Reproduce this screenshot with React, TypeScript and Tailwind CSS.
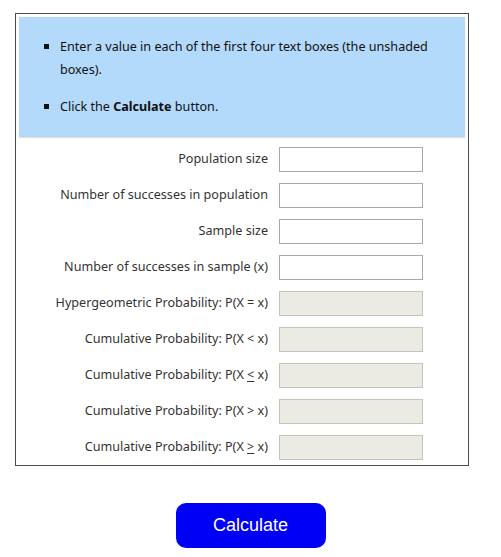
const inputs = [
  { label: 'Population size', shaded: false },
  { label: 'Number of successes in population', shaded: false },
  { label: 'Sample size', shaded: false },
  { label: 'Number of successes in sample (x)', shaded: false },
  { label: 'Hypergeometric Probability: P(X = x)', shaded: true },
  { label: 'Cumulative Probability: P(X < x)', shaded: true },
  { label: 'Cumulative Probability: P(X ≤ x)', shaded: true, op: '<' },
  { label: 'Cumulative Probability: P(X > x)', shaded: true },
  { label: 'Cumulative Probability: P(X ≥ x)', shaded: true, op: '>' },
];

function Label({ label, op }: { label: string; op?: string }) {
  if (!op) return <>{label}</>;
  // underlined comparison sign, like the old <u>&lt;</u> markup
  return (
    <>
      Cumulative Probability: P(X <span className="underline underline-offset-2">{op}</span> x)
    </>
  );
}

export default function App() {
  return (
    <div className="min-h-[557px] bg-white pt-[13px] pl-[15px] font-['Noto_Sans','Open_Sans',sans-serif] text-[12.6px]">
      <div className="w-[454px] border border-[#4a4a4a] p-[3px] pb-[5px]">
        <div className="bg-[#b3d9fb] pt-[18px] pb-[19px] pl-[25px] pr-[30px] text-[#111] shadow-[0_1px_1px_rgba(0,0,0,0.12)]">
          <ul className="flex flex-col gap-[14px]">
            <li className="flex items-start gap-[11px] leading-[23px]">
              <span className="mt-[9px] h-[5px] w-[5px] shrink-0 bg-[#111]" />
              <span>Enter a value in each of the first four text boxes (the unshaded boxes).</span>
            </li>
            <li className="flex items-start gap-[11px] leading-[23px]">
              <span className="mt-[9px] h-[5px] w-[5px] shrink-0 bg-[#111]" />
              <span>
                Click the <b className="font-bold">Calculate</b> button.
              </span>
            </li>
          </ul>
        </div>
        <div className="mt-[10px] flex flex-col gap-[11px] pr-[42px]">
          {inputs.map((row) => (
            <div key={row.label} className="flex items-center justify-end gap-[11px]">
              <span className="whitespace-nowrap text-[#333]">
                <Label label={row.label} op={row.op} />
              </span>
              <input
                type="text"
                readOnly={row.shaded}
                className={`h-[25px] w-[144px] border outline-none ${
                  row.shaded ? 'border-[#c4c4bc] bg-[#ebebe4]' : 'border-[#a9a9a9] bg-white'
                }`}
              />
            </div>
          ))}
        </div>
      </div>
      <div className="mt-[37px] flex justify-center pr-[15px]">
        <button className="h-[45px] w-[150px] rounded-[10px] bg-[#0000f5] font-['Liberation_Sans',Arial,sans-serif] text-[18px] text-white">
          Calculate
        </button>
      </div>
    </div>
  );
}
